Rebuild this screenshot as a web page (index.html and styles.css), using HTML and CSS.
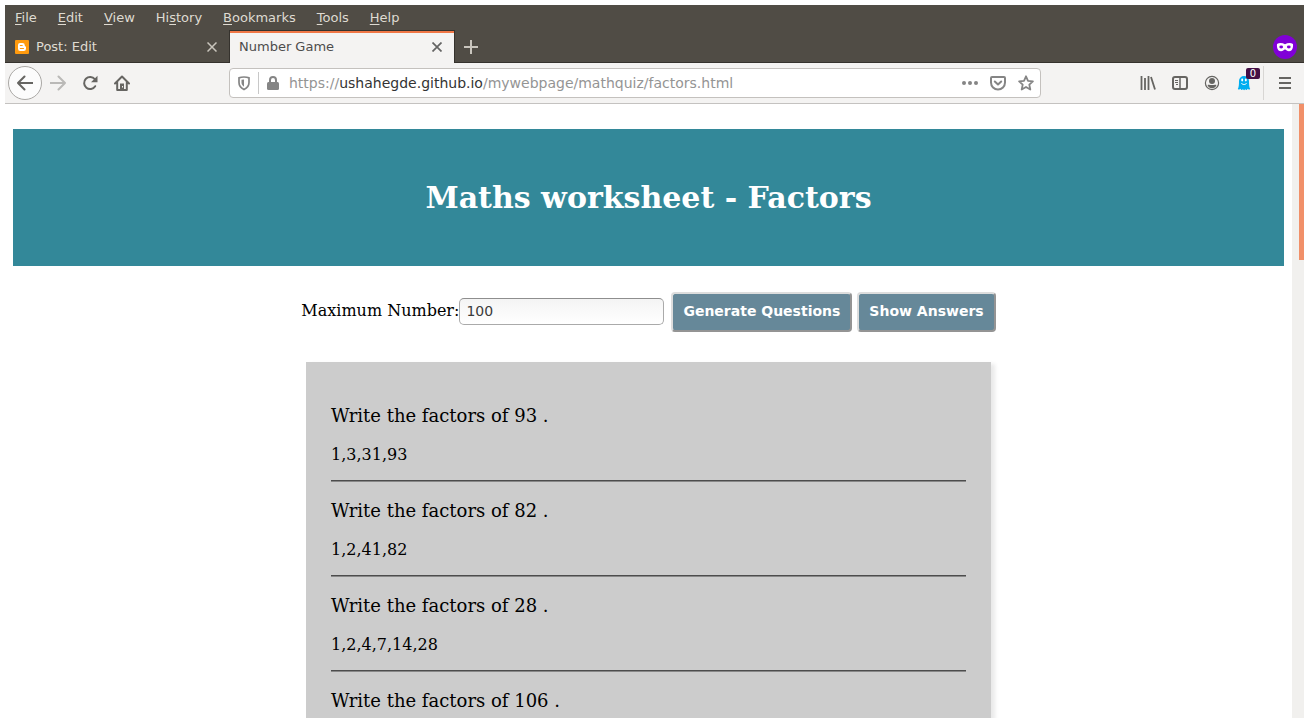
FILE: index.html
```
<!DOCTYPE html>
<html lang="en">
<head>
<meta charset="UTF-8">
<meta name="viewport" content="width=device-width, initial-scale=1.0">
<title>Number Game</title>
<link rel="stylesheet" href="styles.css">
</head>
<body>
<div class="window">
    <nav class="menubar">
        <button class="menu"><u>F</u>ile</button>
        <button class="menu"><u>E</u>dit</button>
        <button class="menu"><u>V</u>iew</button>
        <button class="menu">Hi<u>s</u>tory</button>
        <button class="menu"><u>B</u>ookmarks</button>
        <button class="menu"><u>T</u>ools</button>
        <button class="menu"><u>H</u>elp</button>
    </nav>

    <div class="tabs">
        <div class="tab">
            <svg class="favicon" width="14" height="14" viewBox="0 0 14 14">
                <rect width="14" height="14" rx="1" fill="#ff9a0e"/>
                <path d="M5 3h2.500a2.300 2.300 0 0 1 2.300 2.300c0 .8.2 1.200 1.200 1.200v2.200A2.300 2.300 0 0 1 8.700 11H5.300A2.300 2.300 0 0 1 3 8.700V5a2 2 0 0 1 2-2z" fill="#fff"/>
                <path d="M5.300 5.500h1.900M5.300 8.500h3.200" stroke="#ff9a0e" stroke-width="1.200" stroke-linecap="round"/>
            </svg>
            <span class="tab-name">Post: Edit</span>
            <button class="close" aria-label="Close tab">
                <svg width="10" height="10" viewBox="0 0 10 10"><path d="M.5.5l9 9M9.500.5l-9 9" stroke="currentColor" stroke-width="1.500"/></svg>
            </button>
        </div>
        <div class="tab active">
            <span class="tab-name">Number Game</span>
            <button class="close" aria-label="Close tab">
                <svg width="10" height="10" viewBox="0 0 10 10"><path d="M.5.5l9 9M9.500.5l-9 9" stroke="currentColor" stroke-width="1.700"/></svg>
            </button>
        </div>
        <button class="new-tab" aria-label="New tab">
            <svg width="14" height="14" viewBox="0 0 14 14"><path d="M7 0v14M0 7h14" stroke="currentColor" stroke-width="2"/></svg>
        </button>
        <svg class="private" width="24" height="24" viewBox="0 0 24 24">
            <circle cx="12" cy="12" r="12" fill="#8000d7"/>
            <path d="M4 9c2.500-1.400 5.500-1 8 .3 2.500-1.300 5.500-1.700 8-.3.4 4-.8 7.200-4 7.200-2 0-2.800-1.800-4-1.800s-2 1.800-4 1.800c-3.200 0-4.400-3.200-4-7.200z" fill="#fff"/>
            <ellipse cx="8.200" cy="12" rx="1.900" ry="1.400" fill="#8000d7"/>
            <ellipse cx="15.800" cy="12" rx="1.900" ry="1.400" fill="#8000d7"/>
        </svg>
    </div>

    <div class="toolbar">
        <button class="tool back" aria-label="Back">
            <svg width="16" height="16" viewBox="0 0 16 16"><path d="M15.500 8H1M7.500 1.500L1 8l6.500 6.500" fill="none" stroke="currentColor" stroke-width="2" stroke-linecap="round" stroke-linejoin="round"/></svg>
        </button>
        <button class="tool" disabled aria-label="Forward">
            <svg width="16" height="16" viewBox="0 0 16 16"><path d="M.5 8H15M8.500 1.500L15 8l-6.500 6.500" fill="none" stroke="currentColor" stroke-width="2" stroke-linecap="round" stroke-linejoin="round"/></svg>
        </button>
        <button class="tool" aria-label="Reload">
            <svg width="16" height="16" viewBox="0 0 16 16"><path d="M13.200 11.200A6 6 0 1 1 12.800 4.200" fill="none" stroke="currentColor" stroke-width="2" stroke-linecap="round"/><path d="M15.500.8v6.400H9z" fill="currentColor"/></svg>
        </button>
        <button class="tool" aria-label="Home">
            <svg width="16" height="16" viewBox="0 0 16 16"><path d="M1 8.500L8 1.500l7 7M3.200 7.500V15h9.600V7.500" fill="none" stroke="currentColor" stroke-width="2" stroke-linecap="round" stroke-linejoin="round"/><path d="M6 8.500h4V15H6z" fill="currentColor"/><path d="M8 11h1v1.500H8z" fill="#f4f3f2"/></svg>
        </button>

        <div class="urlbar">
            <svg width="14" height="16" viewBox="0 0 14 16"><path d="M7 2c2 0 3.600.3 5 .9v4.600c0 3.300-1.800 5.500-5 7-3.200-1.500-5-3.700-5-7V2.900C3.400 2.300 5 2 7 2z" fill="none" stroke="currentColor" stroke-width="1.700"/><path d="M7 4.500v7.300c-1.700-1.100-2.500-2.500-2.500-4.500V4.800z" fill="currentColor"/></svg>
            <span class="divider"></span>
            <svg width="14" height="16" viewBox="0 0 14 16"><rect x="1" y="7" width="12" height="8" rx="1.500" fill="currentColor"/><path d="M4 8V5a3 3 0 0 1 6 0v3" fill="none" stroke="currentColor" stroke-width="2"/></svg>
            <a class="url" href="#">https://<span class="host">ushahegde.github.io</span>/mywebpage/mathquiz/factors.html</a>
            <svg width="16" height="16" viewBox="0 0 16 16" fill="currentColor"><circle cx="2" cy="8" r="2"/><circle cx="8" cy="8" r="2"/><circle cx="14" cy="8" r="2"/></svg>
            <svg width="16" height="16" viewBox="0 0 16 16" fill="none" stroke="currentColor" stroke-width="2" stroke-linecap="round" stroke-linejoin="round"><path d="M2 2h12a1 1 0 0 1 1 1v4.500a7 7 0 0 1-14 0V3a1 1 0 0 1 1-1z"/><path d="M4.800 6.500L8 9.500l3.200-3"/></svg>
            <svg width="16" height="16" viewBox="0 0 16 16"><path d="M8 1.300l2 4.500 4.900.5-3.600 3.300 1 4.900L8 12l-4.300 2.500 1-4.900L1.100 6.300 6 5.800z" fill="none" stroke="currentColor" stroke-width="1.800" stroke-linejoin="round"/></svg>
        </div>

        <button class="tool" aria-label="Library">
            <svg width="16" height="16" viewBox="0 0 16 16"><path d="M1.500 1v14M5 3v12M8.500 1v14M11 2l4 12.500" fill="none" stroke="currentColor" stroke-width="1.800"/></svg>
        </button>
        <button class="tool" aria-label="Sidebars">
            <svg width="16" height="16" viewBox="0 0 16 16"><rect x="1" y="2" width="14" height="12" rx="2" fill="none" stroke="currentColor" stroke-width="2"/><path d="M8 2v12" stroke="currentColor" stroke-width="1.500"/><path d="M3 5.500h3M3 7.500h3M4 9.500h2" stroke="currentColor"/></svg>
        </button>
        <button class="tool" aria-label="Account">
            <svg width="16" height="16" viewBox="0 0 16 16"><circle cx="8" cy="8" r="6.600" fill="none" stroke="currentColor" stroke-width="1.200"/><circle cx="8" cy="6" r="3" fill="currentColor"/><path d="M3.500 10c1.500-.8 2.600 0 4.500 0s3-.8 4.500 0c-.8 2.200-2.400 3.300-4.500 3.300S4.300 12.200 3.500 10z" fill="currentColor"/></svg>
        </button>
        <button class="tool ghost" aria-label="Trackers">
            <svg width="16" height="16" viewBox="0 0 16 16"><path d="M3 6a5 5 0 0 1 10 0c0 3.500.1 6 1.200 8-1 .8-1.800.6-2.600-.2-.6 1.600-1.900 1.600-2.400.2-.5 1.500-1.700 1.500-2.300 0-.5 1.400-1.900 1.400-2.400-.2-.8.800-1.700 1-2.700.2C2.900 12 3 9.500 3 6z" fill="#00aef0"/><ellipse cx="6.200" cy="5" rx="1" ry="1.400" fill="#fff"/><ellipse cx="9.800" cy="5" rx="1" ry="1.400" fill="#fff"/><path d="M5.300 8c1.200 2 4.200 2 5.400 0" fill="none" stroke="#fff"/></svg>
            <span class="badge">0</span>
        </button>
        <button class="tool menu-button" aria-label="Open menu">
            <svg width="12" height="12" viewBox="0 0 12 12"><path d="M0 1h12M0 6h12M0 11h12" stroke="currentColor" stroke-width="2"/></svg>
        </button>
    </div>

    <div class="viewport">
        <main class="page">
            <header class="header">
                <h1>Maths worksheet - Factors</h1>
            </header>
            <form class="controls" onsubmit="return false">
                <label for="maxnum">Maximum Number:</label>
                <input type="text" id="maxnum" value="100">
                <button type="button" class="btn">Generate Questions</button>
                <button type="button" class="btn">Show Answers</button>
            </form>
            <section class="questions">
                <p class="question">Write the factors of 93 .</p>
                <p class="answer">1,3,31,93</p>
                <hr>
                <p class="question">Write the factors of 82 .</p>
                <p class="answer">1,2,41,82</p>
                <hr>
                <p class="question">Write the factors of 28 .</p>
                <p class="answer">1,2,4,7,14,28</p>
                <hr>
                <p class="question">Write the factors of 106 .</p>
            </section>
        </main>
        <div class="scrollbar">
            <div class="thumb"></div>
        </div>
    </div>
</div>
</body>
</html>
```
FILE: styles.css
```
* {
    box-sizing: border-box;
}

body {
    margin: 0;
    background: #fff;
    font-family: "DejaVu Sans", sans-serif;
    font-size: 13px;
}

button {
    border: 0;
    padding: 0;
    background: none;
    color: inherit;
    font: inherit;
}

svg {
    display: block;
    flex: none;
}

.window {
    display: flex;
    flex-direction: column;
    height: 100vh;
    padding: 5px 9px 9px 5px;
}

/* menu bar */
.menubar {
    display: flex;
    gap: 21px;
    height: 25px;
    padding: 0 10px;
    background: #504c45;
    color: #dfdbd2;
}

.menu u {
    text-underline-offset: 2px;
}

/* tabs */
.tabs {
    display: flex;
    height: 33px;
    background: #504c45;
    color: #dfdbd2;
    box-shadow: inset 0 -1px #35322d;
}

.tab {
    display: flex;
    align-items: center;
    gap: 7px;
    width: 225px;
    padding: 0 13px 0 10px;
}

.tab.active {
    width: 224px;
    padding: 0 12px 0 9px;
    background: #f4f3f2;
    color: #4c4c4c;
    box-shadow: inset 0 1px #35322d, inset 0 3px #f07746, -1px 0 #35322d, 1px 0 #35322d;
}

.tab-name {
    flex: 1;
}

.close {
    opacity: 0.85;
}

.new-tab {
    margin-left: 10px;
    opacity: 0.85;
}

.private {
    align-self: flex-end;
    margin: 0 7px 4px auto;
}

/* toolbar */
.toolbar {
    display: flex;
    align-items: center;
    height: 41px;
    padding-left: 3px;
    background: #f4f3f2;
    border-bottom: 1px solid #c4c2c0;
    color: #666562;
}

.tool {
    display: flex;
    align-items: center;
    justify-content: center;
    position: relative;
    width: 32px;
    height: 34px;
}

.tool:disabled {
    color: #bab9b7;
}

.back {
    width: 34px;
    border: 1px solid #aaa8a5;
    border-radius: 50%;
    background: #fcfcfc;
}

.urlbar {
    display: flex;
    flex: 1;
    align-items: center;
    gap: 12px;
    height: 30px;
    margin: 0 91px;
    padding: 0 6px 0 7px;
    border: 1px solid #c4c1be;
    border-radius: 4px;
    background: #fff;
    color: #858585;
}

.divider {
    width: 1px;
    height: 22px;
    margin: 0 -5px;
    background: #c8c8c8;
}

.url {
    flex: 1;
    margin-left: -3px;
    color: #949494;
    font-size: 14px;
    text-decoration: none;
}

.host {
    color: #333;
}

.badge {
    position: absolute;
    top: 2px;
    right: 0;
    width: 14px;
    height: 11px;
    border-radius: 2px;
    background: #440f45;
    color: #fff;
    font-size: 10px;
    line-height: 11px;
}

.menu-button {
    width: 41px;
    margin-left: 3px;
    padding-left: 2px;
    border-left: 1px solid #d8d6d4;
}

/* page */
.viewport {
    display: flex;
    flex: 1;
    min-height: 0;
}

.page {
    flex: 1;
    padding: 25px 8px 0;
    overflow: hidden;
    color: #000;
    font-family: "DejaVu Serif", serif;
    font-size: 16px;
}

.header {
    padding: 50px;
    background: #338899;
    color: #fff;
    text-align: center;
}

.header h1 {
    margin: 0;
    font-size: 30px;
    line-height: 37px;
}

.controls {
    display: flex;
    align-items: center;
    justify-content: center;
    margin: 26px 0 30px;
}

.controls label {
    padding-bottom: 4px;
}

.controls input {
    width: 205px;
    height: 27px;
    margin: 0 7px 2px 0;
    padding: 0 6px;
    border: 1px solid #aaa;
    border-top-color: #8e8e8e;
    border-radius: 5px;
    background: linear-gradient(#f4f4f4, #fff);
    color: #3c3c3c;
    font: 14px "DejaVu Sans", sans-serif;
}

.btn {
    height: 40px;
    padding: 0 10px 2px;
    border: 2px solid;
    border-color: #ddd #949494 #949494 #ddd;
    border-radius: 4px;
    background: #668899;
    color: #fff;
    font: bold 14px "DejaVu Sans", sans-serif;
}

.btn + .btn {
    margin-left: 5px;
}

.questions {
    width: 685px;
    max-width: 100%;
    margin: 0 auto;
    padding: 25px;
    background: #ccc;
    box-shadow: 4px 2px 4px #eaeaea;
}

.questions p {
    margin: 0;
}

.question {
    padding-top: 18px;
    font-size: 18px;
    line-height: 21px;
}

.answer {
    padding: 19px 0 15px;
    line-height: 20px;
}

.questions hr {
    height: 2px;
    margin: 0;
    border: 0;
    border-top: 1px solid #4c4c4c;
    background: #888;
}

.scrollbar {
    width: 12px;
    padding-left: 7px;
    background: #f1f0ee;
}

.thumb {
    height: 156px;
    background: #f19069;
}
```
